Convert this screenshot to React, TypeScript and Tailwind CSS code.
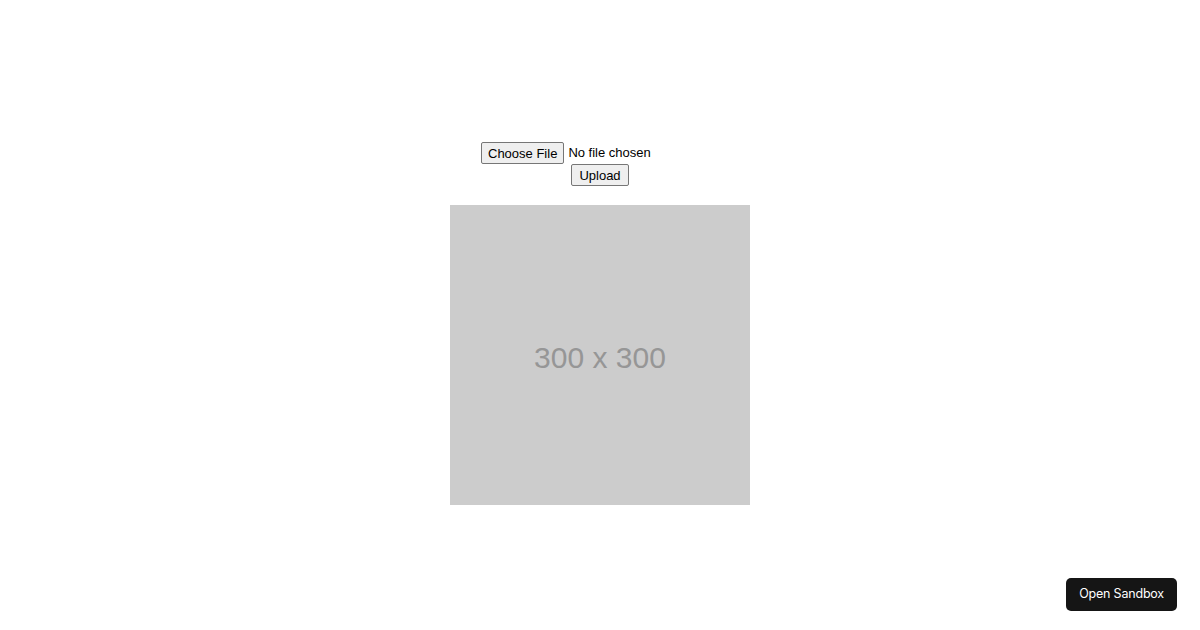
export default function App() {
  return (
    <div className="min-h-[630px] w-full bg-white font-['Liberation_Sans',Arial,sans-serif]">
      <div className="flex flex-col items-center pt-[142px]">
        <div className="flex w-[238px] items-center text-[13px] text-black">
          <button className="h-[22px] rounded-[2px] border border-[#767676] bg-[#efefef] px-[6px] leading-none">
            Choose File
          </button>
          <span className="ml-[4px]">No file chosen</span>
        </div>
        <button className="h-[22px] rounded-[2px] border border-[#767676] bg-[#efefef] px-[7px] text-[13px] leading-none text-black">
          Upload
        </button>
        <div className="mt-[19px] flex h-[300px] w-[300px] items-center justify-center bg-[#cccccc] pt-[4px]">
          <span className="text-[30px] text-[#969696]">300 x 300</span>
        </div>
      </div>
      <button className="fixed bottom-[19px] right-[23px] h-[33px] rounded-[5px] bg-[#151515] px-[13px] font-['Inter',sans-serif] text-[12.5px] tracking-[-0.2px] text-white">
        Open Sandbox
      </button>
    </div>
  );
}
